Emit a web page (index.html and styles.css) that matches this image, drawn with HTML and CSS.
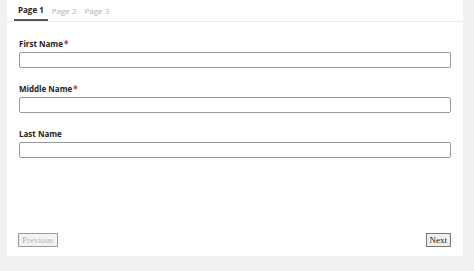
FILE: index.html
```html
<!DOCTYPE html>
<html>
<head>
<meta charset="utf-8">
<link rel="stylesheet" href="styles.css">
</head>
<body>
<div class="panel">
  <div class="tabs">
    <div class="tab active">Page 1</div>
    <div class="tab">Page 2</div>
    <div class="tab">Page 3</div>
  </div>
  <div class="form">
    <div class="field">
      <label class="label">First Name <span class="req">*</span></label>
      <input class="input" type="text">
    </div>
    <div class="field">
      <label class="label">Middle Name <span class="req">*</span></label>
      <input class="input" type="text">
    </div>
    <div class="field">
      <label class="label">Last Name</label>
      <input class="input" type="text">
    </div>
  </div>
  <div class="nav">
    <button class="btn" disabled>Previous</button>
    <button class="btn">Next</button>
  </div>
</div>
</body>
</html>
```
FILE: styles.css
```css
html, body {
  margin: 0;
  padding: 0;
}
body {
  background: #f1f1f1;
  font-family: "Open Sans", "Liberation Sans", sans-serif;
  width: 474px;
  height: 271px;
  overflow: hidden;
}
.panel {
  margin-left: 7px;
  width: 456px;
  height: 256px;
  background: #ffffff;
  display: flex;
  flex-direction: column;
}
.tabs {
  display: flex;
  padding-left: 7px;
  height: 21px;
  border-bottom: 1px solid #ebebeb;
  box-sizing: content-box;
}
.tab {
  padding: 0 4px;
  font-size: 8px;
  line-height: 21px;
  color: #b0b0b0;
  box-sizing: border-box;
}
.tab.active {
  color: #222;
  font-weight: 700;
  border-bottom: 2px solid #555;
  line-height: 19px;
}
.form {
  padding: 16px 12px 0 12px;
  display: flex;
  flex-direction: column;
  gap: 15px;
}
.field {
  display: flex;
  flex-direction: column;
  gap: 2px;
}
.label {
  font-size: 8px;
  font-weight: 700;
  color: #222;
  line-height: 12px;
}
.req {
  color: #c0262d;
  margin-left: -1px;
}
.input {
  margin: 0;
  height: 16px;
  box-sizing: border-box;
  border: 1px solid #999;
  border-radius: 2px;
  background: #fff;
  padding: 0 3px;
}
.nav {
  margin-top: auto;
  display: flex;
  justify-content: space-between;
  padding: 0 12px 9px 11px;
}
.btn {
  margin: 0;
  font-family: "Liberation Serif", "DejaVu Serif", serif;
  font-size: 9px;
  height: 14px;
  padding: 0 3px;
  line-height: 12px;
  background: #efefef;
  border: 1px solid #767676;
  color: #222;
  border-radius: 0;
}
.btn:disabled {
  color: #b5b5b5;
  border-color: #9a9a9a;
  background: #f3f3f3;
}
```
